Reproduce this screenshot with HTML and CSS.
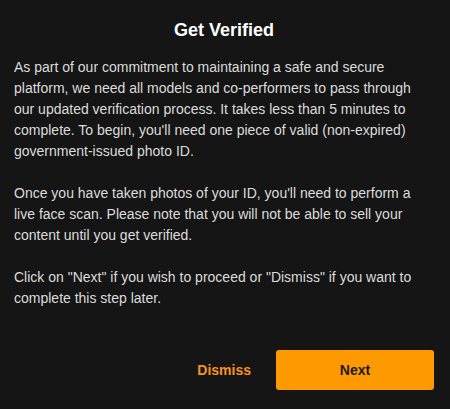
FILE: index.html
```html
<!DOCTYPE html>
<html lang="en">
<head>
<meta charset="utf-8">
<title>Get Verified</title>
<link rel="stylesheet" href="styles.css">
</head>
<body>
<div class="modal">
  <h1 class="title">Get Verified</h1>
  <div class="body-text">
    <p>As part of our commitment to maintaining a safe and secure platform, we need all models and co-performers to pass through our updated verification process. It takes less than 5 minutes to complete. To begin, you'll need one piece of valid (non-expired) government-issued photo ID.</p>
    <p>Once you have taken photos of your ID, you'll need to perform a live face scan. Please note that you will not be able to sell your content until you get verified.</p>
    <p>Click on "Next" if you wish to proceed or "Dismiss" if you want to complete this step later.</p>
  </div>
  <div class="actions">
    <button class="btn-dismiss" type="button">Dismiss</button>
    <button class="btn-next" type="button">Next</button>
  </div>
</div>
</body>
</html>
```

FILE: styles.css
```css
html, body {
  margin: 0;
  padding: 0;
  background: #151515;
}
.modal {
  box-sizing: border-box;
  width: 450px;
  height: 409px;
  padding: 19px 16px 19px 14px;
  display: flex;
  flex-direction: column;
  font-family: "Liberation Sans", Arial, sans-serif;
  color: #dcdcdc;
}
.title {
  margin: 0 0 16px;
  font-size: 18px;
  line-height: 22px;
  font-weight: 700;
  color: #ffffff;
  text-align: center;
}
.body-text {
  font-size: 14px;
  line-height: 21px;
}
.body-text p {
  margin: 0 0 21px;
}
.body-text p:last-child {
  margin-bottom: 0;
}
.actions {
  margin-top: auto;
  display: flex;
  justify-content: flex-end;
  align-items: center;
  gap: 25px;
}
.btn-dismiss {
  background: none;
  border: none;
  padding: 0;
  font-family: "Liberation Sans", Arial, sans-serif;
  font-size: 14px;
  font-weight: 700;
  color: #f7941d;
  cursor: pointer;
}
.btn-next {
  width: 158px;
  height: 40px;
  border: none;
  border-radius: 3px;
  background: #ff9900;
  font-family: "Liberation Sans", Arial, sans-serif;
  font-size: 14px;
  font-weight: 700;
  color: #1b1b1b;
  cursor: pointer;
}
```
